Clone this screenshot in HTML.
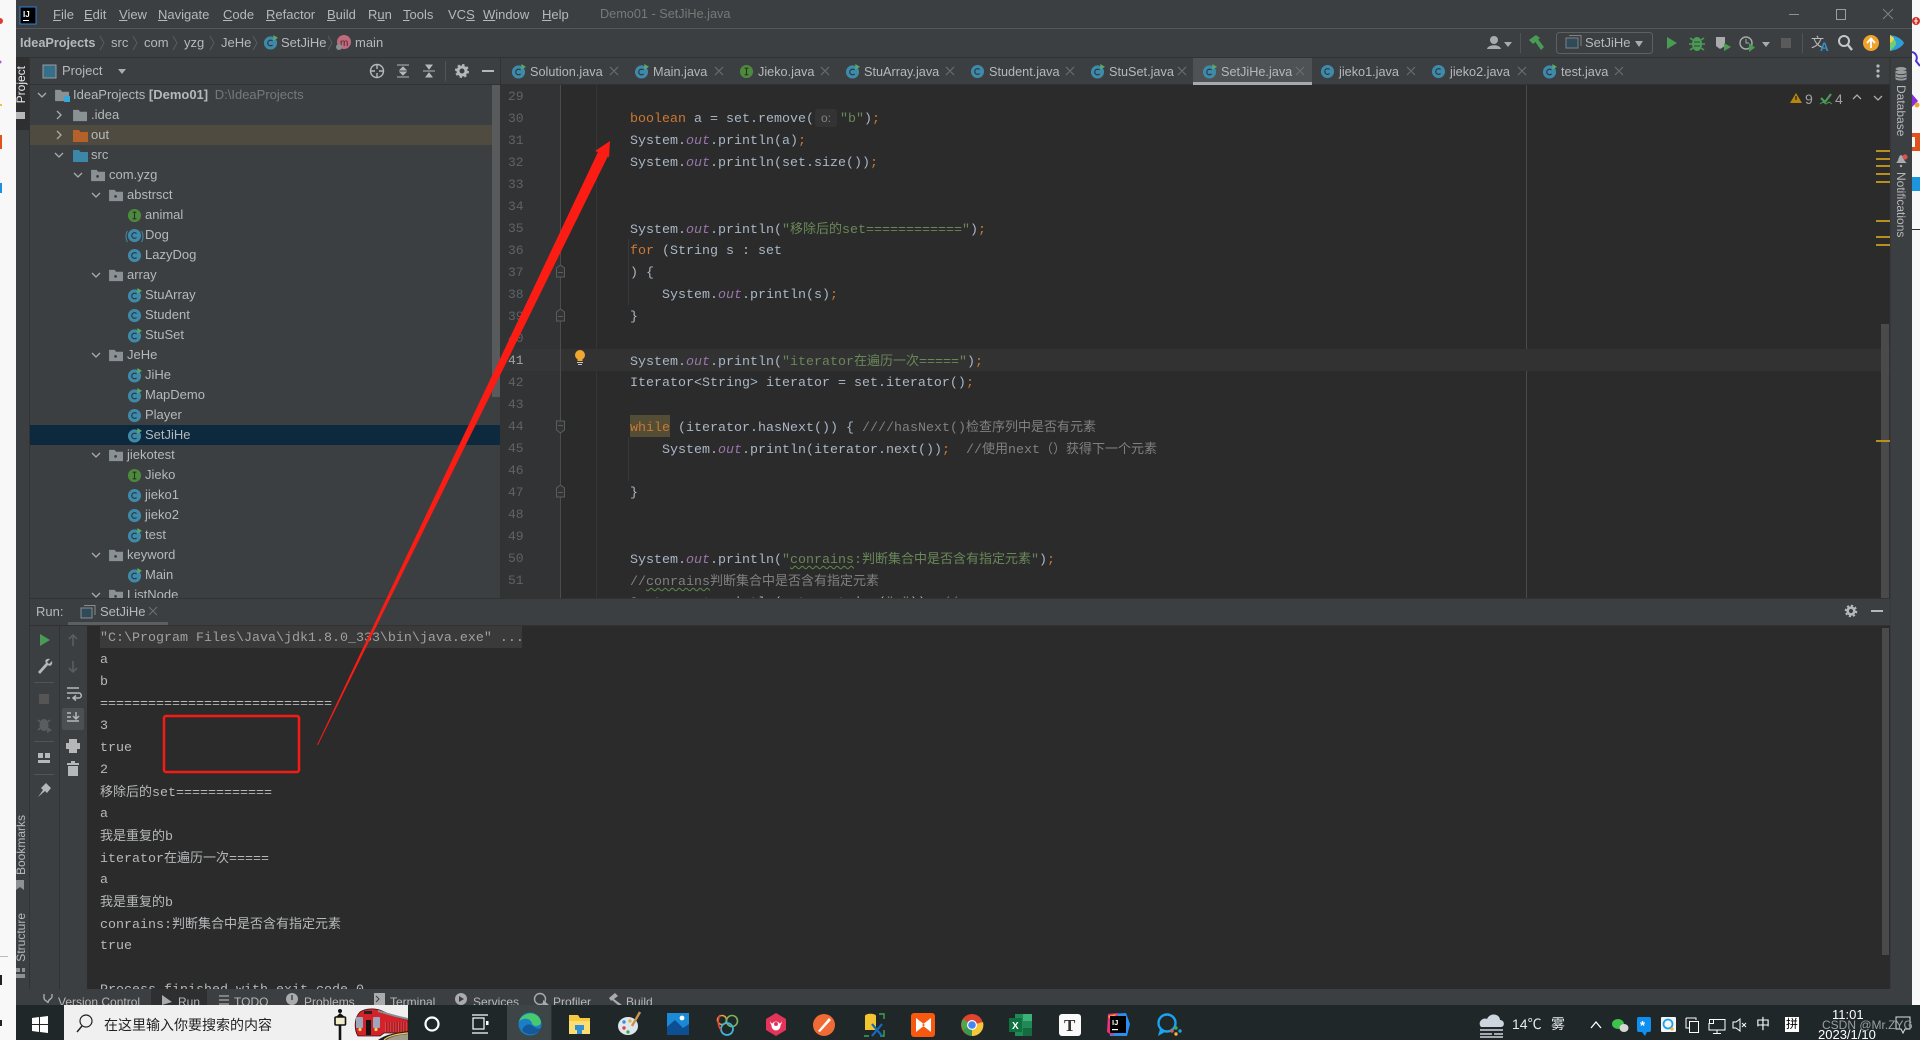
<!DOCTYPE html>
<html lang="zh"><head><meta charset="utf-8"><title>Demo01 - SetJiHe.java</title>
<style>
html,body{margin:0;padding:0;width:1920px;height:1040px;overflow:hidden;background:#f8f8f8}
body{position:relative;font:13px "Liberation Sans","Noto Sans CJK SC",sans-serif;color:#b6b8ba}
div,svg{position:absolute}
svg{left:0;top:0;overflow:visible}
.t{white-space:nowrap;line-height:20px;height:20px}
.tb{font-size:12.7px;margin-top:1px}
.st{font-size:12px;margin-top:1px}
.g{color:#787878}
.ln{left:508px;width:26px;font:13px/22px "Liberation Mono",monospace;color:#606366;height:22px;margin-top:1px}
.c{left:630px;white-space:pre;font:13.33px/22px "Liberation Mono","Noto Sans CJK SC",monospace;color:#a9b7c6;height:22px;margin-top:2px}
.r{left:100px;white-space:pre;font:13.33px/22px "Liberation Mono","Noto Sans CJK SC",monospace;color:#b6b8ba;height:22px;margin-top:2px}
.k{color:#cc7832}.s{color:#6a8759}.o{color:#9876aa;font-style:italic}.m{color:#808080}
i.z{font-style:normal;font-size:13px}
.w{text-decoration:underline wavy #5f8a4a 1px;text-underline-offset:2px}
.v{writing-mode:vertical-rl;font-size:12px;line-height:14px;white-space:nowrap;color:#b6b8ba}
.vl{transform:rotate(180deg)}
</style></head><body>

<svg width="0" height="0" style="position:absolute">
<defs>
<symbol id="c" viewBox="0 0 16 16"><circle cx="8" cy="8" r="7" fill="#3f8aaa"/><path d="M10.2 5.9A3 3 0 1 0 10.2 10.1" fill="none" stroke="#27353c" stroke-width="1.2"/></symbol>
<symbol id="cr" viewBox="0 0 16 16"><circle cx="8" cy="8.5" r="7" fill="#3f8aaa"/><path d="M10.2 6.4A3 3 0 1 0 10.2 10.6" fill="none" stroke="#27353c" stroke-width="1.2"/><path d="M11 0 16 3 11 6Z" fill="#59a869"/></symbol>
<symbol id="i" viewBox="0 0 16 16"><circle cx="8" cy="8" r="7" fill="#4d8a3e"/><path d="M6 4.5H10M6 11.5H10M8 4.5V11.5" stroke="#27351f" stroke-width="1.2" fill="none"/></symbol>
<symbol id="f" viewBox="0 0 16 14"><path d="M0 1H6L7.5 3H15V13H0Z" fill="#8a9195"/><circle cx="7" cy="8" r="1.5" fill="#3c3f41"/></symbol>
<symbol id="d" viewBox="0 0 16 14"><path d="M0 1H6L7.5 3H15V13H0Z" fill="#8a9195"/></symbol>
</defs>
</svg>

<!-- window base -->
<div style="left:16px;top:0;width:1896px;height:1005px;background:#3c3f41"></div>
<div style="left:16px;top:28px;width:1896px;height:1px;background:#55585a"></div>
<div style="left:16px;top:57px;width:1896px;height:1px;background:#323232"></div>
<div style="left:16px;top:57px;width:14px;height:73px;background:#2d2f30"></div>
<div style="left:30px;top:84px;width:1860px;height:1px;background:#323232"></div>
<div style="left:29px;top:57px;width:1px;height:932px;background:#323232"></div>

<!-- editor -->
<div style="left:501px;top:85px;width:59px;height:513px;background:#313335"></div>
<div style="left:560px;top:85px;width:1330px;height:513px;background:#2b2b2b"></div>
<div style="left:560px;top:85px;width:1px;height:513px;background:#4a4c4e"></div>
<div style="left:596px;top:85px;width:1px;height:513px;background:#353535"></div>
<div style="left:1526px;top:85px;width:1px;height:513px;background:#4a4a4a"></div>
<div style="left:501px;top:349px;width:59px;height:22px;background:#343638"></div>
<div style="left:561px;top:349px;width:1329px;height:22px;background:#323232"></div>
<div style="left:628px;top:239px;width:1px;height:66px;background:#383838"></div>
<div style="left:628px;top:437px;width:1px;height:44px;background:#383838"></div>
<div style="left:630px;top:415px;width:40px;height:22px;background:#524d34"></div>
<div style="left:1881px;top:324px;width:8px;height:274px;background:#4a4a4a"></div>

<!-- tree rows -->
<div style="left:30px;top:125px;width:471px;height:20px;background:#4f4b41"></div>
<div style="left:30px;top:425px;width:471px;height:20px;background:#0d293e"></div>
<div style="left:492px;top:85px;width:8px;height:312px;background:#585a5c"></div>
<div style="left:500px;top:57px;width:1px;height:541px;background:#323232"></div>

<!-- active tab -->
<div style="left:1193px;top:58px;width:119px;height:27px;background:#4e5254"></div>
<div style="left:1193px;top:82px;width:119px;height:3px;background:#a7a9ab"></div>

<svg width="1920" height="1040">
 <!-- window logo -->
 <rect x="20" y="7" width="16" height="17" fill="#000" stroke="#2f7fd8" stroke-width="1"/>
 <text x="23" y="17" font-family="Liberation Sans" font-size="8" font-weight="700" fill="#fff">IJ</text>
 <rect x="23" y="20" width="6" height="1" fill="#fff"/>
 <!-- breadcrumbs chevrons -->
 <g fill="none" stroke="#5a5d5f" stroke-width="1">
  <path d="M100 36 104 43 100 50M133 36 137 43 133 50M173 36 177 43 173 50M210 36 214 43 210 50M253 36 257 43 253 50M328 36 332 43 328 50"/>
 </g>
 <use href="#cr" x="263" y="35" width="15" height="15"/>
 <circle cx="344" cy="42" r="7" fill="#c16a7c"/><text x="340" y="46" font-size="10" fill="#3a2a2e" font-family="Liberation Sans">m</text>
 <circle cx="339" cy="47" r="3" fill="#8a8f92"/>
 <!-- window controls -->
 <path d="M1789 14.5H1799" stroke="#8f9193" fill="none"/>
 <rect x="1836.5" y="9.5" width="9" height="10" fill="none" stroke="#9a9c9e"/>
 <path d="M1883 9 1893 19M1893 9 1883 19" stroke="#7f8183" fill="none"/>
 <!-- toolbar right -->
 <circle cx="1494" cy="40" r="4" fill="#a9abad"/><path d="M1487 49C1488 44 1500 44 1501 49Z" fill="#a9abad"/>
 <path d="M1504 42H1512L1508 47Z" fill="#a9abad"/>
 <path d="M1520.5 33V53" stroke="#515456"/>
 <path d="M1529 40 1536 35 1540 38 1533 44Z" fill="#499c54"/><path d="M1534 40 1537 38 1544 47 1541 50Z" fill="#499c54"/>
 <rect x="1556.5" y="32.5" width="96" height="21" rx="3" fill="none" stroke="#5e6163"/>
 <rect x="1566" y="38" width="12" height="10" fill="#2f4a58" stroke="#7d8083"/><path d="M1569 35.5H1581V46" fill="none" stroke="#7d8083"/>
 <path d="M1635 41H1643L1639 47Z" fill="#a9abad"/>
 <path d="M1667 37 1677 43 1667 49Z" fill="#499c54"/>
 <ellipse cx="1697" cy="44" rx="5" ry="7" fill="#499c54"/><path d="M1690 38 1693 40M1704 38 1701 40M1689 44H1692M1702 44H1705M1690 50 1693 48M1704 50 1701 48" stroke="#499c54" stroke-width="1.6"/><path d="M1694 42H1700M1694 46H1700" stroke="#3c3f41"/>
 <path d="M1716 37H1725V46L1720 49 1716 46Z" fill="#a9abad"/><path d="M1724 43 1731 47 1724 51Z" fill="#499c54"/>
 <circle cx="1746" cy="43" r="6" fill="none" stroke="#a9abad" stroke-width="1.4"/><path d="M1746 39V43H1749" stroke="#a9abad" fill="none"/><path d="M1749 43 1755 47.5 1749 52Z" fill="#499c54"/>
 <path d="M1762 42H1770L1766 47Z" fill="#a9abad"/>
 <rect x="1781" y="38" width="10" height="10" fill="#5a5a5a"/>
 <path d="M1802.5 33V53" stroke="#515456"/>
 <text x="1811" y="47" font-size="13" fill="#bbb" font-family="Noto Sans CJK SC">文</text><text x="1820" y="51" font-size="12" font-weight="700" fill="#3592c4" font-family="Liberation Sans">A</text>
 <circle cx="1844" cy="41" r="5" fill="none" stroke="#c4c6c8" stroke-width="2"/><path d="M1848 45 1852 50" stroke="#c4c6c8" stroke-width="2.4"/>
 <circle cx="1871" cy="43" r="8" fill="#f0a32c"/><path d="M1871 48V40M1867 43 1871 38.5 1875 43" stroke="#fff" stroke-width="1.8" fill="none"/>
 <path d="M1890 35C1897 36 1902 39 1904 43 1902 47 1897 50 1890 51Z" fill="#2f9fd8"/><path d="M1890 35C1893 38 1896 40 1896 43 1896 46 1893 48 1890 51Z" fill="#6fce74"/><path d="M1890 35V43C1892 42 1894 40 1894 38Z" fill="#f3d34a"/>
 <!-- project header -->
 <rect x="43" y="65" width="13" height="13" fill="#356f8a" stroke="#9a9c9e"/>
 <path d="M118 69H126L122 74Z" fill="#a9abad"/>
 <circle cx="377" cy="71" r="6.5" fill="none" stroke="#b5b7b9" stroke-width="1.4"/><path d="M377 64V69M377 73V78M370 71H375M379 71H384" stroke="#b5b7b9" stroke-width="1.4"/>
 <path d="M397 65H409M397 77H409M403 67 406 70H400ZM403 75 406 72H400Z" stroke="#b5b7b9" fill="#b5b7b9" stroke-width="1"/>
 <path d="M423 71H435M429 69 426 65H432ZM429 73 426 77H432Z" stroke="#b5b7b9" fill="#b5b7b9" stroke-width="1"/>
 <path d="M445.5 61V81" stroke="#515456"/>
 <circle cx="462" cy="71" r="4" fill="none" stroke="#b5b7b9" stroke-width="3"/><circle cx="462" cy="71" r="6" fill="none" stroke="#b5b7b9" stroke-width="2" stroke-dasharray="2.4 2.3"/>
 <path d="M482 71H494" stroke="#b5b7b9" stroke-width="2"/>
 <!-- left stripe -->
 <path d="M16 112H25V119H16Z" fill="#b5b7b9"/>
 <path d="M16 880H24V890L20 887 16 890Z" fill="#8e9092"/>
 <path d="M16 968H20V972H16ZM22 968H25V972H22ZM16 974H25V978H16Z" fill="#8e9092"/>
 <!-- tab icons -->
 <use href="#cr" x="511" y="64" width="15" height="15"/>
 <use href="#cr" x="634" y="64" width="15" height="15"/>
 <use href="#i" x="739" y="64" width="15" height="15"/>
 <use href="#cr" x="845" y="64" width="15" height="15"/>
 <use href="#c" x="970" y="64" width="15" height="15"/>
 <use href="#cr" x="1090" y="64" width="15" height="15"/>
 <use href="#cr" x="1202" y="64" width="15" height="15"/>
 <use href="#c" x="1320" y="64" width="15" height="15"/>
 <use href="#c" x="1431" y="64" width="15" height="15"/>
 <use href="#cr" x="1542" y="64" width="15" height="15"/>
 <g stroke="#6e7072" fill="none">
  <path d="M610 67 618 75M618 67 610 75M715 67 723 75M723 67 715 75M821 67 829 75M829 67 821 75M946 67 954 75M954 67 946 75M1066 67 1074 75M1074 67 1066 75M1178 67 1186 75M1186 67 1178 75M1296 67 1304 75M1304 67 1296 75M1407 67 1415 75M1415 67 1407 75M1518 67 1526 75M1526 67 1518 75M1615 67 1623 75M1623 67 1615 75"/>
 </g>
 <circle cx="1878" cy="66" r="1.6" fill="#b5b7b9"/><circle cx="1878" cy="71" r="1.6" fill="#b5b7b9"/><circle cx="1878" cy="76" r="1.6" fill="#b5b7b9"/>
 <!-- right stripe -->
 <path d="M1890 57V989" stroke="#323232"/>
 <ellipse cx="1901" cy="69" rx="5.5" ry="2" fill="#9a9c9e"/><path d="M1895.5 71V79C1896 81 1906 81 1906.5 79V71" fill="#9a9c9e"/><path d="M1896 73.5C1898 75 1904 75 1906 73.5M1896 77C1898 78.5 1904 78.5 1906 77" stroke="#3c3f41" fill="none"/>
 <path d="M1896 163C1899 161 1898 156 1901 155 1904 156 1903 161 1907 163Z" fill="#a9abad"/><circle cx="1901" cy="166" r="1.2" fill="#a9abad"/><circle cx="1905" cy="157" r="2.6" fill="#d9534f"/>
 <!-- editor markers -->
 <path d="M1790 103 1796 93 1802 103Z" fill="#b8860b"/><path d="M1796 96V100" stroke="#2b2b2b" stroke-width="1.4"/>
 <path d="M1821 98 1825 102 1831 94" stroke="#499c54" stroke-width="2.2" fill="none"/><path d="M1820 104 1823 102 1826 104 1829 102 1832 104" stroke="#499c54" fill="none"/>
 <path d="M1853 99 1857 95 1861 99M1874 96 1878 100 1882 96" stroke="#a9abad" stroke-width="1.3" fill="none"/>
 <g fill="#b8901e">
  <rect x="1876" y="150" width="14" height="2"/><rect x="1876" y="158" width="14" height="2"/><rect x="1876" y="165" width="14" height="2"/><rect x="1876" y="173" width="14" height="2"/><rect x="1876" y="181" width="14" height="2"/><rect x="1876" y="220" width="14" height="2"/><rect x="1876" y="236" width="14" height="2"/><rect x="1876" y="244" width="14" height="2"/><rect x="1876" y="440" width="14" height="2"/>
 </g>
 <!-- fold markers -->
 <g fill="#313335" stroke="#5a5d5f">
  <path d="M556.5 268 560.5 265 564.5 268V277H556.5Z"/><path d="M556.5 312 560.5 309 564.5 312V321H556.5Z"/><path d="M556.5 421V430L560.5 433 564.5 430V421Z"/><path d="M556.5 488 560.5 485 564.5 488V497H556.5Z"/>
  <path d="M558 272.5H563M558 316.5H563M558 425.5H563M558 492.5H563" fill="none"/>
 </g>
 <!-- bulb -->
 <circle cx="580" cy="355" r="5" fill="#f0a732"/><rect x="577.5" y="358" width="5" height="3" fill="#f0a732"/><path d="M577 362.5H583M578 364.5H582" stroke="#c4c6c8"/>
 <!-- tree arrows -->
 <g fill="none" stroke="#a9abad" stroke-width="1.3">
  <path d="M38 93 42 97 46 93"/><path d="M57 111 61 115 57 119"/><path d="M57 131 61 135 57 139"/><path d="M55 153 59 157 63 153"/><path d="M74 173 78 177 82 173"/><path d="M92 193 96 197 100 193"/><path d="M92 273 96 277 100 273"/><path d="M92 353 96 357 100 353"/><path d="M92 453 96 457 100 453"/><path d="M92 553 96 557 100 553"/><path d="M92 593 96 597 100 593"/>
 </g>
 <!-- tree folders -->
 <use href="#d" x="55" y="89" width="15" height="13"/><rect x="64" y="96" width="6" height="6" fill="#3aa6d8"/>
 <use href="#d" x="73" y="109" width="15" height="13"/>
 <path d="M73 130H79L80.5 132H88V142H73Z" fill="#b4612c"/>
 <path d="M73 150H79L80.5 152H88V162H73Z" fill="#3c86a8"/>
 <use href="#f" x="91" y="169" width="15" height="13"/>
 <use href="#f" x="109" y="189" width="15" height="13"/>
 <use href="#f" x="109" y="269" width="15" height="13"/>
 <use href="#f" x="109" y="349" width="15" height="13"/>
 <use href="#f" x="109" y="449" width="15" height="13"/>
 <use href="#f" x="109" y="549" width="15" height="13"/>
 <use href="#f" x="109" y="589" width="15" height="13"/>
 <!-- tree class icons -->
 <use href="#i" x="127" y="208" width="15" height="15"/>
 <use href="#c" x="127" y="228" width="15" height="15"/>
 <path d="M127.5 231C125.5 234 125.5 239 127.5 242M141.5 231C143.5 234 143.5 239 141.5 242" stroke="#3f8aaa" fill="none"/>
 <use href="#c" x="127" y="248" width="15" height="15"/>
 <use href="#cr" x="127" y="288" width="15" height="15"/>
 <use href="#c" x="127" y="308" width="15" height="15"/>
 <use href="#cr" x="127" y="328" width="15" height="15"/>
 <use href="#cr" x="127" y="368" width="15" height="15"/>
 <use href="#cr" x="127" y="388" width="15" height="15"/>
 <use href="#c" x="127" y="408" width="15" height="15"/>
 <use href="#cr" x="127" y="428" width="15" height="15"/>
 <use href="#i" x="127" y="468" width="15" height="15"/>
 <use href="#c" x="127" y="488" width="15" height="15"/>
 <use href="#c" x="127" y="508" width="15" height="15"/>
 <use href="#cr" x="127" y="528" width="15" height="15"/>
 <use href="#cr" x="127" y="568" width="15" height="15"/>
</svg>

<!-- menu -->
<div class="t" style="left:53px;top:5px"><u>F</u>ile</div>
<div class="t" style="left:84px;top:5px"><u>E</u>dit</div>
<div class="t" style="left:119px;top:5px"><u>V</u>iew</div>
<div class="t" style="left:158px;top:5px"><u>N</u>avigate</div>
<div class="t" style="left:223px;top:5px"><u>C</u>ode</div>
<div class="t" style="left:266px;top:5px"><u>R</u>efactor</div>
<div class="t" style="left:327px;top:5px"><u>B</u>uild</div>
<div class="t" style="left:368px;top:5px">R<u>u</u>n</div>
<div class="t" style="left:403px;top:5px"><u>T</u>ools</div>
<div class="t" style="left:448px;top:5px">VC<u>S</u></div>
<div class="t" style="left:483px;top:5px"><u>W</u>indow</div>
<div class="t" style="left:542px;top:5px"><u>H</u>elp</div>
<div class="t g" style="left:600px;top:4px;font-size:12.7px">Demo01 - SetJiHe.java</div>

<!-- breadcrumbs -->
<div class="t" style="left:20px;top:33px;font-weight:700;font-size:12.7px">IdeaProjects</div>
<div class="t" style="left:111px;top:33px">src</div>
<div class="t" style="left:144px;top:33px">com</div>
<div class="t" style="left:184px;top:33px">yzg</div>
<div class="t" style="left:221px;top:33px">JeHe</div>
<div class="t" style="left:281px;top:33px">SetJiHe</div>
<div class="t" style="left:355px;top:33px">main</div>
<div class="t" style="left:1585px;top:33px">SetJiHe</div>

<!-- project header + tabs -->
<div class="t" style="left:62px;top:61px">Project</div>
<div class="t tb" style="left:530px;top:61px">Solution.java</div>
<div class="t tb" style="left:653px;top:61px">Main.java</div>
<div class="t tb" style="left:758px;top:61px">Jieko.java</div>
<div class="t tb" style="left:864px;top:61px">StuArray.java</div>
<div class="t tb" style="left:989px;top:61px">Student.java</div>
<div class="t tb" style="left:1109px;top:61px">StuSet.java</div>
<div class="t tb" style="left:1221px;top:61px">SetJiHe.java</div>
<div class="t tb" style="left:1339px;top:61px">jieko1.java</div>
<div class="t tb" style="left:1450px;top:61px">jieko2.java</div>
<div class="t tb" style="left:1561px;top:61px">test.java</div>

<!-- vertical labels -->
<div class="v vl" style="left:14px;top:66px;color:#e8e8e8">Project</div>
<div class="v vl" style="left:14px;top:815px">Bookmarks</div>
<div class="v vl" style="left:14px;top:913px">Structure</div>
<div class="v" style="left:1894px;top:85px">Database</div>
<div class="v" style="left:1894px;top:172px">Notifications</div>

<!-- tree text -->
<div class="t" style="left:73px;top:85px">IdeaProjects <b>[Demo01]</b> <span class="g" style="margin-left:3px">D:\IdeaProjects</span></div>
<div class="t" style="left:91px;top:105px">.idea</div>
<div class="t" style="left:91px;top:125px">out</div>
<div class="t" style="left:91px;top:145px">src</div>
<div class="t" style="left:109px;top:165px">com.yzg</div>
<div class="t" style="left:127px;top:185px">abstrsct</div>
<div class="t" style="left:145px;top:205px">animal</div>
<div class="t" style="left:145px;top:225px">Dog</div>
<div class="t" style="left:145px;top:245px">LazyDog</div>
<div class="t" style="left:127px;top:265px">array</div>
<div class="t" style="left:145px;top:285px">StuArray</div>
<div class="t" style="left:145px;top:305px">Student</div>
<div class="t" style="left:145px;top:325px">StuSet</div>
<div class="t" style="left:127px;top:345px">JeHe</div>
<div class="t" style="left:145px;top:365px">JiHe</div>
<div class="t" style="left:145px;top:385px">MapDemo</div>
<div class="t" style="left:145px;top:405px">Player</div>
<div class="t" style="left:145px;top:425px">SetJiHe</div>
<div class="t" style="left:127px;top:445px">jiekotest</div>
<div class="t" style="left:145px;top:465px">Jieko</div>
<div class="t" style="left:145px;top:485px">jieko1</div>
<div class="t" style="left:145px;top:505px">jieko2</div>
<div class="t" style="left:145px;top:525px">test</div>
<div class="t" style="left:127px;top:545px">keyword</div>
<div class="t" style="left:145px;top:565px">Main</div>
<div class="t" style="left:127px;top:585px">ListNode</div>

<!-- line numbers -->
<div class="ln" style="top:85px">29</div><div class="ln" style="top:107px">30</div><div class="ln" style="top:129px">31</div><div class="ln" style="top:151px">32</div><div class="ln" style="top:173px">33</div><div class="ln" style="top:195px">34</div><div class="ln" style="top:217px">35</div><div class="ln" style="top:239px">36</div><div class="ln" style="top:261px">37</div><div class="ln" style="top:283px">38</div><div class="ln" style="top:305px">39</div><div class="ln" style="top:327px">40</div><div class="ln" style="top:349px;color:#a4a3a3">41</div><div class="ln" style="top:371px">42</div><div class="ln" style="top:393px">43</div><div class="ln" style="top:415px">44</div><div class="ln" style="top:437px">45</div><div class="ln" style="top:459px">46</div><div class="ln" style="top:481px">47</div><div class="ln" style="top:503px">48</div><div class="ln" style="top:525px">49</div><div class="ln" style="top:547px">50</div><div class="ln" style="top:569px">51</div>

<!-- code -->
<div class="c" style="top:107px"><span class="k">boolean</span> a = set.remove(</div>
<div style="left:815px;top:109px;width:22px;height:18px;background:#333;border-radius:3px;color:#808080;font:12px/18px 'Liberation Sans',sans-serif;text-align:center">o:</div>
<div class="c" style="top:107px;left:840px"><span class="s">"b"</span>)<span class="k">;</span></div>
<div class="c" style="top:129px">System.<span class="o">out</span>.println(a)<span class="k">;</span></div>
<div class="c" style="top:151px">System.<span class="o">out</span>.println(set.size())<span class="k">;</span></div>
<div class="c" style="top:217px">System.<span class="o">out</span>.println(<span class="s">"<i class="z">移除后的</i>set============"</span>)<span class="k">;</span></div>
<div class="c" style="top:239px"><span class="k">for</span> (String s : set</div>
<div class="c" style="top:261px">) {</div>
<div class="c" style="top:283px">    System.<span class="o">out</span>.println(s)<span class="k">;</span></div>
<div class="c" style="top:305px">}</div>
<div class="c" style="top:349px">System.<span class="o">out</span>.println(<span class="s">"iterator<i class="z">在遍历一次</i>====="</span>)<span class="k">;</span></div>
<div class="c" style="top:371px">Iterator&lt;String&gt; iterator = set.iterator()<span class="k">;</span></div>
<div class="c" style="top:415px"><span class="k">while</span> (iterator.hasNext()) { <span class="m">////hasNext()<i class="z">检查序列中是否有元素</i></span></div>
<div class="c" style="top:437px">    System.<span class="o">out</span>.println(iterator.next())<span class="k">;</span>  <span class="m">//<i class="z">使用</i>next<i class="z">（）获得下一个元素</i></span></div>
<div class="c" style="top:481px">}</div>
<div class="c" style="top:547px">System.<span class="o">out</span>.println(<span class="s">"<span class="w">conrains</span>:<i class="z">判断集合中是否含有指定元素</i>"</span>)<span class="k">;</span></div>
<div class="c" style="top:569px"><span class="m">//<span class="w">conrains</span><i class="z">判断集合中是否含有指定元素</i></span></div>
<div class="c" style="top:591px">System.<span class="o">out</span>.println(set.contains(<span class="s">"a"</span>))<span class="k">;</span> <span class="m">//</span></div>
<div class="t" style="left:1805px;top:89px;color:#a0a2a4;font-size:14px">9</div>
<div class="t" style="left:1835px;top:89px;color:#a0a2a4;font-size:14px">4</div>

<!-- run panel -->
<div style="left:30px;top:598px;width:1860px;height:27px;background:#3c3f41;border-top:1px solid #323232;box-sizing:border-box"></div>
<div style="left:30px;top:625px;width:1860px;height:1px;background:#323232"></div>
<div style="left:68px;top:622px;width:100px;height:3px;background:#5c5f61"></div>
<div style="left:30px;top:626px;width:57px;height:363px;background:#3c3f41"></div>
<div style="left:59px;top:626px;width:1px;height:363px;background:#323232"></div>
<div style="left:87px;top:626px;width:1803px;height:363px;background:#2b2b2b"></div>
<div style="left:100px;top:626px;width:422px;height:22px;background:#3a3a3a"></div>
<div style="left:62px;top:708px;width:22px;height:22px;background:#4c5052;border-radius:2px"></div>
<div style="left:1882px;top:628px;width:7px;height:327px;background:#4a4a4a"></div>
<div class="t" style="left:36px;top:602px">Run:</div>
<div class="t" style="left:100px;top:602px">SetJiHe</div>
<div class="r" style="top:626px;color:#a0a0a0">"C:\Program Files\Java\jdk1.8.0_333\bin\java.exe" ...</div>
<div class="r" style="top:648px">a</div>
<div class="r" style="top:670px">b</div>
<div class="r" style="top:692px">=============================</div>
<div class="r" style="top:714px">3</div>
<div class="r" style="top:736px">true</div>
<div class="r" style="top:758px">2</div>
<div class="r" style="top:780px"><i class="z">移除后的</i>set============</div>
<div class="r" style="top:802px">a</div>
<div class="r" style="top:824px"><i class="z">我是重复的</i>b</div>
<div class="r" style="top:846px">iterator<i class="z">在遍历一次</i>=====</div>
<div class="r" style="top:868px">a</div>
<div class="r" style="top:890px"><i class="z">我是重复的</i>b</div>
<div class="r" style="top:912px">conrains:<i class="z">判断集合中是否含有指定元素</i></div>
<div class="r" style="top:934px">true</div>
<div class="r" style="top:978px">Process finished with exit code 0</div>

<!-- status bar -->
<div style="left:16px;top:989px;width:1896px;height:16px;background:#3c3f41"></div>
<div style="left:151px;top:989px;width:56px;height:16px;background:#2d2f30"></div>
<div class="t st" style="left:58px;top:991px">Version Control</div>
<div class="t st" style="left:178px;top:991px">Run</div>
<div class="t st" style="left:234px;top:991px">TODO</div>
<div class="t st" style="left:304px;top:991px">Problems</div>
<div class="t st" style="left:390px;top:991px">Terminal</div>
<div class="t st" style="left:473px;top:991px">Services</div>
<div class="t st" style="left:553px;top:991px">Profiler</div>
<div class="t st" style="left:626px;top:991px">Build</div>

<svg width="1920" height="1040">
 <!-- run header -->
 <rect x="81" y="608" width="11" height="10" fill="#2f4a58" stroke="#8a8d90"/><path d="M84 605.5H95V615" stroke="#8a8d90" fill="none"/>
 <path d="M149 607 157 615M157 607 149 615" stroke="#6e7072" fill="none"/>
 <circle cx="1851" cy="611" r="3.4" fill="none" stroke="#b5b7b9" stroke-width="2.6"/><circle cx="1851" cy="611" r="5.4" fill="none" stroke="#b5b7b9" stroke-width="1.8" stroke-dasharray="2.2 2"/>
 <path d="M1871 611H1883" stroke="#b5b7b9" stroke-width="2"/>
 <!-- run stripe 1 -->
 <path d="M40 634 50 640 40 646Z" fill="#499c54"/>
 <path d="M38 672 46 663C44 660 47 658 50 659L47 662 49 664 52 661C53 665 50 667 48 665L40 674Z" fill="#b5b7b9"/>
 <path d="M34 682.5H54M34 741.5H54M34 774.5H54" stroke="#515456"/>
 <rect x="39" y="694" width="10" height="10" fill="#555"/>
 <ellipse cx="44" cy="725" rx="4.5" ry="6" fill="#5a5c5e"/><path d="M38 720 50 730M50 720 38 730" stroke="#5a5c5e" stroke-width="1.6"/><path d="M47 727 52 730 47 733Z" fill="#5a5c5e"/>
 <path d="M38 753H43V758H38ZM45 753H50V758H45ZM38 760H50V763H38Z" fill="#b5b7b9"/>
 <path d="M38 797 43 790 41 788 46 783 51 788 47 793 45 791Z" fill="#b5b7b9"/>
 <!-- run stripe 2 -->
 <path d="M73 646V635M69 639 73 635 77 639" stroke="#5a5c5e" stroke-width="1.6" fill="none"/>
 <path d="M73 661V672M69 668 73 672 77 668" stroke="#5a5c5e" stroke-width="1.6" fill="none"/>
 <path d="M67 688H79M67 693H79C82 693 82 698 79 698H74M67 698H70M76 695.5 73 698 76 700.5" stroke="#b5b7b9" stroke-width="1.5" fill="none"/>
 <path d="M67 713H71M67 717H71M67 721H79M76 712V719M73 716 76 719 79 716" stroke="#b5b7b9" stroke-width="1.5" fill="none"/>
 <path d="M69 739H77V743H69ZM66 743H80V749H66ZM69 749H77V753H69Z" fill="#b5b7b9"/>
 <path d="M68 766H78V776H68ZM67 763H79V765H67ZM71 761H75V763H71Z" fill="#b5b7b9"/>
 <!-- status icons -->
 <path d="M44 994V998C44 1001 48 1001 48 1003M52 994V997C52 999 48 999 48 1003" stroke="#a9abad" fill="none" stroke-width="1.4"/>
 <path d="M162 995 172 1002 162 1005Z" fill="#a9abad"/>
 <path d="M219 996H229M219 1000H229M219 1004H229" stroke="#a9abad" stroke-width="1.2"/>
 <circle cx="292" cy="999" r="6" fill="#a9abad"/><path d="M292 995V1000" stroke="#3c3f41" stroke-width="1.4"/>
 <rect x="374" y="993" width="11" height="12" fill="#a9abad"/><path d="M376 996 379 999 376 1002" stroke="#3c3f41" fill="none"/>
 <circle cx="461" cy="999" r="6" fill="#a9abad"/><path d="M459 996 464 999 459 1002Z" fill="#3c3f41"/>
 <circle cx="540" cy="999" r="5.5" fill="none" stroke="#a9abad" stroke-width="1.4"/><path d="M543 1000 549 1005H543Z" fill="#a9abad"/>
 <path d="M609 998 615 993 618 996 614 999 622 1005H618L612 1000 611 1001Z" fill="#a9abad"/>
</svg>

<!-- taskbar -->
<div style="left:16px;top:1005px;width:1904px;height:35px;background:#1f2729"></div>
<div style="left:64px;top:1005px;width:344px;height:35px;background:#f0f0f0"></div>
<div style="left:507px;top:1005px;width:44px;height:35px;background:#3d4547"></div>
<div class="t" style="left:104px;top:1015px;color:#222;font-size:14px;line-height:20px">在这里输入你要搜索的内容</div>
<svg width="1920" height="1040">
 <path d="M32 1018 39 1017V1024H32ZM40 1017 48 1016V1024H40ZM32 1025H39V1032L32 1031ZM40 1025H48V1033L40 1032Z" fill="#fff"/>
 <circle cx="86" cy="1021" r="6" fill="none" stroke="#222" stroke-width="1.2"/><path d="M82 1026 77 1032" stroke="#222" stroke-width="1.4"/>
 <!-- lamp + train -->
 <path d="M340 1024V1040" stroke="#111" stroke-width="2.6"/><rect x="335" y="1017" width="10.5" height="8" rx="1" fill="#f3ecc8" stroke="#111" stroke-width="1.6"/><path d="M336 1017 340 1013 345 1017Z" fill="#111"/><circle cx="340" cy="1011" r="2" fill="#111"/>
 <path d="M408 1020C398 1018 390 1015 382 1011 376 1008 366 1008 360 1012 354 1018 354 1030 358 1036H380L384 1033H408Z" fill="#d3222a" stroke="#3a1416" stroke-width=".8"/>
 <path d="M378 1011C388 1014 398 1017 408 1019" stroke="#8a8f96" stroke-width="2" fill="none"/>
 <path d="M385 1022V1032H408V1022" fill="#a81c22"/>
 <path d="M385 1027H408" stroke="#e0474c" stroke-width="10" stroke-dasharray="1 1.6" fill="none"/>
 <rect x="356" y="1017" width="7" height="11" rx="1" fill="#9ea6bb"/><rect x="373" y="1017" width="7" height="11" rx="1" fill="#9ea6bb"/>
 <rect x="366" y="1020" width="5" height="15" fill="#141414"/><rect x="364" y="1011" width="8" height="3" fill="#2a2320"/>
 <circle cx="360" cy="1029.500" r="1.600" fill="#f3d45c"/><circle cx="376" cy="1029.500" r="1.600" fill="#f3d45c"/>
 <path d="M378 1040C386 1034 396 1033 408 1031V1040Z" fill="#1d1d1d"/>
 <path d="M386 1040C391 1036 399 1035 408 1034V1040Z" fill="#a09a8a"/><path d="M384 1040C389 1035 399 1034 408 1033" stroke="#e9c85a" stroke-width="1.3" fill="none"/>
 <!-- cortana, task view -->
 <circle cx="432" cy="1024" r="6.5" fill="none" stroke="#fff" stroke-width="2.2"/>
 <path d="M472 1015H488M472 1033H488" stroke="#fff" stroke-width="1.2"/><rect x="473" y="1018" width="11" height="11" fill="none" stroke="#fff" stroke-width="1.2"/><rect x="486" y="1021" width="2.5" height="4" fill="#fff"/>
 <path d="M551.5 1005V1040" stroke="#2a3234"/>
 <!-- edge -->
 <circle cx="530" cy="1024" r="11.5" fill="#1a7fc6"/><path d="M519 1022C521 1012 538 1009 541 1022 541 1027 532 1027 532 1023 530 1017 521 1018 519 1022Z" fill="#47c96d"/><path d="M522 1030C525 1024 529 1023 533 1026 536 1029 539 1029 541 1028 538 1035 527 1037 522 1030Z" fill="#125a9c"/>
 <!-- folder -->
 <path d="M569 1015H578L580 1018H590V1034H569Z" fill="#f6c93f"/><path d="M569 1021H590V1034H569Z" fill="#fbdd73"/><rect x="575" y="1025" width="9" height="5" fill="#2f8fd8"/><rect x="577" y="1030" width="5" height="4" fill="#2f8fd8"/>
 <!-- palette -->
 <ellipse cx="628" cy="1026" rx="10" ry="9" fill="#dfe7ee"/><circle cx="624" cy="1022" r="1.7" fill="#3a8fd8"/><circle cx="630" cy="1021" r="1.7" fill="#e2b63a"/><circle cx="624" cy="1028" r="1.7" fill="#d8453a"/><circle cx="628" cy="1032" r="1.7" fill="#4aa84f"/><path d="M632 1026 640 1012" stroke="#c9924f" stroke-width="2.5"/>
 <!-- photos -->
 <rect x="667" y="1013" width="22" height="22" fill="#1a89d6"/><path d="M667 1035V1027L675 1020 683 1028 689 1024V1035Z" fill="#0e4f94"/><circle cx="682" cy="1018" r="2.4" fill="#fff"/>
 <!-- navicat -->
 <circle cx="722" cy="1020" r="4.5" fill="none" stroke="#e8a13a" stroke-width="1.6"/><circle cx="732" cy="1021" r="5.5" fill="none" stroke="#7ab55c" stroke-width="1.6"/><circle cx="727" cy="1029" r="6" fill="none" stroke="#3fb4d8" stroke-width="1.8"/><path d="M720 1015C717 1020 718 1026 721 1030" stroke="#e0453a" stroke-width="1.6" fill="none"/>
 <!-- red hex -->
 <path d="M776 1013 786 1019V1030L776 1036 766 1030V1019Z" fill="#e4345a"/><path d="M770 1021C771 1030 781 1030 782 1021 780 1026 772 1026 770 1021Z" fill="#fff"/><circle cx="776" cy="1026" r="4.5" fill="#fff"/><circle cx="776" cy="1024" r="2" fill="#e4345a"/>
 <!-- orange pen -->
 <circle cx="824" cy="1025" r="11" fill="#f06a35"/><path d="M818 1031 829 1018 831 1020 820 1032Z" fill="#fff"/>
 <!-- db tool -->
 <path d="M865 1016C865 1013 876 1013 876 1016V1030H865Z" fill="#f3c531"/><path d="M879 1014H884V1019M864 1036H869M884 1030V1036H880" stroke="#3aa655" stroke-width="1.4" fill="none"/><path d="M872 1036 882 1024M882 1036 872 1024" stroke="#1669b8" stroke-width="2.2"/>
 <!-- orange box -->
 <rect x="911" y="1013" width="24" height="24" rx="3" fill="#f8590f"/><path d="M916 1018 925 1025 916 1032ZM931 1018 922 1025 931 1032Z" fill="#fff"/>
 <!-- chrome -->
 <circle cx="972" cy="1025" r="11" fill="#e0442f"/><path d="M972 1025 963 1030A11 11 0 0 1 963 1019Z" fill="#4aa84f"/><path d="M972 1025 983 1022A11 11 0 0 1 972 1036Z" fill="#f5c63a"/><path d="M963 1030 972 1025 972 1036A11 11 0 0 1 963 1030Z" fill="#36994d"/><circle cx="972" cy="1025" r="5" fill="#fff"/><circle cx="972" cy="1025" r="3.8" fill="#4285f4"/>
 <!-- excel -->
 <rect x="1015" y="1014" width="17" height="22" fill="#1f8a56"/><rect x="1023" y="1014" width="9" height="7" fill="#3cb27a"/><rect x="1023" y="1028" width="9" height="8" fill="#156a41"/><rect x="1009" y="1018" width="13" height="14" fill="#0f7040"/>
 <text x="1012" y="1029" font-size="10" font-weight="700" fill="#fff" font-family="Liberation Sans">X</text>
 <!-- T -->
 <rect x="1059" y="1014" width="22" height="22" rx="3" fill="#fafafa"/><text x="1064" y="1031" font-size="17" font-weight="700" fill="#333" font-family="Liberation Serif">T</text>
 <!-- IJ -->
 <path d="M1108 1014 1126 1013 1130 1024 1127 1036 1110 1036Z" fill="#2b8ff0"/><path d="M1108 1014 1118 1013 1113 1036 1107 1032Z" fill="#ef2f7d"/><path d="M1108 1016 1116 1014 1112 1022Z" fill="#f6a71f"/>
 <rect x="1110" y="1016" width="16" height="17" fill="#000"/><text x="1112" y="1025" font-size="7.5" font-weight="700" fill="#fff" font-family="Liberation Sans">IJ</text><rect x="1112" y="1029" width="6" height="1.2" fill="#fff"/>
 <!-- chat -->
 <circle cx="1167" cy="1023" r="8.5" fill="none" stroke="#1ba3ef" stroke-width="2.4"/><path d="M1160 1029 1158 1036 1165 1032" fill="#1ba3ef"/><circle cx="1172" cy="1031" r="1.7" fill="#e2594d"/><circle cx="1176" cy="1028" r="1.7" fill="#3fae54"/><circle cx="1180" cy="1031" r="1.7" fill="#1ba3ef"/><circle cx="1176" cy="1034" r="1.7" fill="#f5b52e"/>
 <!-- tray -->
 <path d="M1481 1027C1477 1022 1483 1017 1487 1019 1490 1012 1500 1014 1500 1020 1505 1020 1505 1027 1501 1027Z" fill="#cdd6df"/><path d="M1480 1030H1503M1480 1034H1492M1494 1034H1503M1480 1037H1503" stroke="#cdd6df" stroke-width="1.5"/>
 <path d="M1591 1028 1596 1022 1601 1028" stroke="#fff" stroke-width="1.3" fill="none"/>
 <ellipse cx="1618" cy="1024" rx="6" ry="5" fill="#3fc24d"/><ellipse cx="1624" cy="1028" rx="4.5" ry="4" fill="#d7d7d7"/>
 <rect x="1637" y="1017" width="14" height="15" rx="2" fill="#0f90f0"/><path d="M1642 1032 1645 1036 1647 1032" fill="#0f90f0"/><text x="1640" y="1030" font-size="13" font-weight="700" fill="#fff" font-family="Liberation Sans">*</text>
 <rect x="1661" y="1017" width="15" height="15" rx="1" fill="#f5f5f5"/><circle cx="1668" cy="1024" r="4.5" fill="none" stroke="#1ba3ef" stroke-width="1.8"/><circle cx="1672" cy="1029" r="1.6" fill="#f5b52e"/>
 <path d="M1686 1018H1696V1020M1686 1018V1028H1689" stroke="#fff" fill="none"/><rect x="1689.5" y="1021.5" width="9" height="11" fill="none" stroke="#fff"/>
 <rect x="1709.5" y="1019.5" width="4" height="4" fill="none" stroke="#fff"/><path d="M1714 1019.5H1725V1030H1709V1023M1717 1030V1033M1713 1033.5H1721" fill="none" stroke="#fff"/>
 <path d="M1733 1022H1736L1740 1019V1031L1736 1028H1733Z" fill="none" stroke="#fff"/><path d="M1742 1023 1746 1027M1746 1023 1742 1027" stroke="#fff"/>
 <rect x="1785" y="1017" width="14" height="15" fill="#fff"/>
 <path d="M1896 1017H1910V1029H1905L1903 1033 1901 1029H1896Z" fill="none" stroke="#dfe3e5"/>
</svg>
<div class="t" style="left:1512px;top:1014px;color:#e8eaec;font-size:14px">14℃</div>
<div class="t" style="left:1551px;top:1014px;color:#e8eaec;font-size:14px">雾</div>
<div class="t" style="left:1756px;top:1014px;color:#fff;font-size:14px">中</div>
<div class="t" style="left:1786px;top:1015px;color:#000;font-size:12px;line-height:18px">拼</div>
<div class="t" style="left:1832px;top:1006px;color:#fff;font-size:13px;line-height:18px">11:01</div>
<div class="t" style="left:1818px;top:1026px;color:#fff;font-size:13px;line-height:18px">2023/1/10</div>
<div class="t" style="left:1822px;top:1016px;color:#9aa0a2;font-size:12px;line-height:18px">CSDN @Mr.ZYG</div>

<!-- desktop fragments left/right -->
<svg width="1920" height="1040">
 <circle cx="0" cy="21" r="3" fill="#e03a2e"/><circle cx="0" cy="62" r="1.5" fill="#a55be0"/><rect x="0" y="104" width="2" height="2" fill="#f0c23a"/><rect x="0" y="135" width="2" height="14" fill="#e0521e"/><rect x="0" y="183" width="2" height="10" fill="#1b8fe0"/>
 <rect x="0" y="975" width="2" height="10" fill="#222"/><rect x="0" y="1020" width="2" height="6" fill="#222"/><path d="M0 956.500H8" stroke="#bbb"/>
 <circle cx="1916" cy="21" r="4" fill="#d3322b"/><path d="M1914 21H1918M1916 18V24" stroke="#fff"/>
 <path d="M1912 52C1916 53 1918 57 1916 61L1920 66" stroke="#4a35d0" stroke-width="2" fill="none"/>
 <path d="M1912 94 1918 101 1912 107Z" fill="#8a2be2"/><circle cx="1917" cy="105" r="2.500" fill="#f0a732"/>
 <path d="M1912 133H1920V151H1912V147H1915V137H1912Z" fill="#e0521e"/><rect x="1912" y="177" width="8" height="14" fill="#1b95e0"/><path d="M1912 229.500H1920" stroke="#333"/>
 <!-- red annotations -->
 <polygon points="610,141 595,151 598,152 317,745 318,745 608,156 609,158" fill="#fb1c14"/>
 <rect x="164" y="716" width="135" height="56" rx="2" fill="none" stroke="#f51c14" stroke-width="2.5"/>
</svg>
</body></html>
